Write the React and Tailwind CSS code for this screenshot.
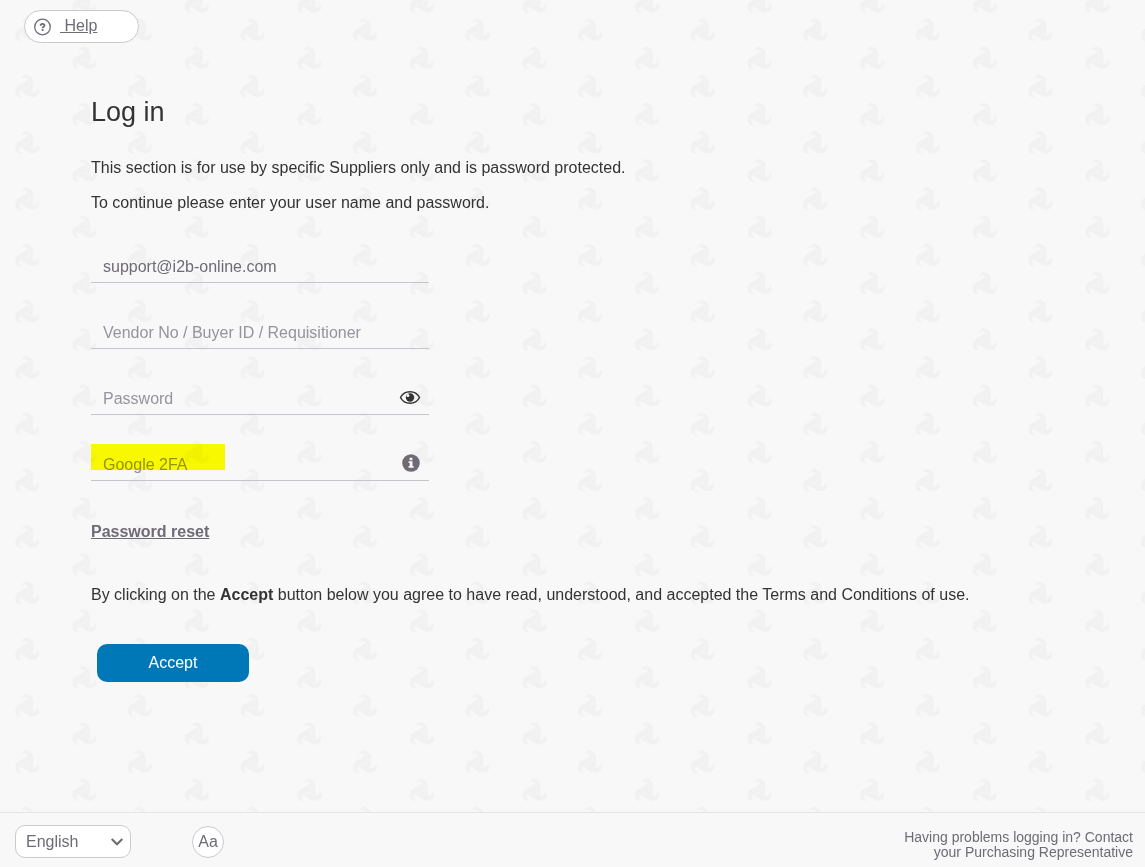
import { useState } from "react";

function Blade({ angle }) {
  return (
    <path
      transform={`rotate(${angle})`}
      d="M-5.5 -8.5 C-5.5 -12.5 -1.5 -14 1.5 -12.8 C5.5 -11.3 6.8 -8 6.5 -4.5 C6.3 -1.5 6 1.5 7 5 C4 5.5 0.5 4 -0.2 1.5 C-1 -1.5 1.2 -4.5 0.3 -7.5 C-0.6 -10.3 -3.5 -10.3 -5.5 -8.5 Z"
    />
  );
}

function Swirl({ x, y }) {
  return (
    <g transform={`translate(${x} ${y})`} fill="#f1f1f1" stroke="#f8f8f8" strokeWidth="0.6">
      <Blade angle={0} />
      <Blade angle={120} />
      <Blade angle={240} />
    </g>
  );
}

function Backdrop() {
  return (
    <svg aria-hidden="true" className="pointer-events-none absolute inset-0 h-full w-full">
      <defs>
        <pattern id="swirls" width="112.56" height="56.3" patternUnits="userSpaceOnUse">
          <Swirl x={27} y={31.5} />
          <Swirl x={84} y={3.3} />
          <Swirl x={84} y={59.6} />
        </pattern>
      </defs>
      <rect width="100%" height="100%" fill="url(#swirls)" />
    </svg>
  );
}

function EyeIcon() {
  return (
    <svg aria-hidden="true" viewBox="0 0 22 16" className="h-4 w-[22px]" fill="none">
      <path d="M1.5 7.5C3.4 3.7 7 1.7 11 1.7S18.6 3.7 20.5 7.5C18.6 11.3 15 13.3 11 13.3S3.4 11.3 1.5 7.5Z" stroke="currentColor" strokeWidth="1.5" strokeLinejoin="round" />
      <circle cx="11" cy="7.5" r="4.2" fill="currentColor" />
      <circle cx="8.9" cy="5.4" r="1.5" fill="#f8f8f8" />
    </svg>
  );
}

function InfoIcon() {
  return (
    <svg aria-hidden="true" viewBox="0 0 18 18" className="h-[18px] w-[18px]">
      <circle cx="9" cy="9" r="8.8" fill="currentColor" />
      <path d="M7.6 3.8H10.4V6.2H7.6ZM6.6 7.2H10.5V12H11.6V13.8H6.6V12H7.7V9H6.6Z" fill="#f8f8f8" />
    </svg>
  );
}

function Field({ label, type = "text", defaultValue, children }) {
  return (
    <div className="relative flex h-[34px] items-center border-b border-[#c5c5cd]">
      <input
        type={type}
        aria-label={label}
        placeholder={label}
        defaultValue={defaultValue}
        className="h-full w-full min-w-0 bg-transparent pt-[2px] pr-2 pl-3 text-base text-[#6e6b75] outline-none placeholder:text-[#96939b]"
      />
      {children}
    </div>
  );
}

export default function App() {
  const [visible, setVisible] = useState(false);
  return (
    <div className="flex min-h-screen flex-col bg-[#f8f8f8] font-['Liberation_Sans',Arial,sans-serif] text-base text-[#333]">
      <div className="relative flex-1">
        <Backdrop />
        <header className="relative px-6 pt-[10px]">
          <a href="#help" className="flex h-[33px] w-[115px] items-center rounded-full border border-[#cacace] bg-white pb-px pl-[9px] text-[#6e6b75]">
            <svg aria-hidden="true" viewBox="0 0 18 18" className="mt-[2px] h-[18px] w-[18px]" fill="none" stroke="currentColor">
              <circle cx="8.5" cy="9" r="7.8" strokeWidth="1.3" />
              <path d="M6.6 7.7C6.6 5.4 10.5 5.4 10.5 7.4C10.5 8.8 8.6 8.7 8.6 10.2" strokeWidth="1.8" />
              <circle cx="8.6" cy="12" r="1.1" fill="currentColor" stroke="none" />
            </svg>
            <span className="ml-2 whitespace-pre underline"> Help</span>
          </a>
        </header>

        <main className="relative px-[91px] pt-[53px] pb-8">
          <h1 className="text-[27px] leading-8">Log in</h1>
          <p className="mt-7 leading-6">This section is for use by specific Suppliers only and is password protected.</p>
          <p className="mt-[11px] leading-6">To continue please enter your user name and password.</p>

          <form onSubmit={(e) => e.preventDefault()}>
            <div className="mt-[34px] flex max-w-[338px] flex-col gap-8">
              <Field label="User name" defaultValue="support@i2b-online.com" />
              <Field label="Vendor No / Buyer ID / Requisitioner" />
              <Field label="Password" type={visible ? "text" : "password"}>
                <button type="button" aria-label="Show password" onClick={() => setVisible(!visible)} className="mr-2 text-[#333]">
                  <EyeIcon />
                </button>
              </Field>
              <Field label="Google 2FA">
                <button type="button" aria-label="About Google 2FA" className="mr-[9px] pb-px text-[#6e6b75]">
                  <InfoIcon />
                </button>
                <span className="pointer-events-none absolute -top-[3px] left-0 h-[26px] w-[134px] bg-[#ff0] mix-blend-multiply" />
              </Field>
            </div>

            <a href="#reset" className="mt-[39px] inline-block leading-6 font-bold text-[#6e6b75] underline">Password reset</a>
            <p className="mt-[39px] leading-6">
              By clicking on the <strong>Accept</strong> button below you agree to have read, understood, and accepted the Terms and Conditions of use.
            </p>
            <button type="submit" className="mt-[37px] ml-[6px] h-[38px] w-[152px] rounded-[10px] bg-[#0077b6] pb-px text-white">Accept</button>
          </form>
        </main>
      </div>

      <footer className="flex items-start justify-between border-t border-[#e5e5e7] pt-3 pr-3 pb-[7px] pl-[15px] text-[#6e6b75]">
        <div className="flex items-end">
          <div className="relative">
            <select aria-label="Language" className="block h-[33px] w-[116px] appearance-none rounded-[10px] border border-[#cacace] bg-white pl-[10px] text-base">
              <option>English</option>
            </select>
            <svg aria-hidden="true" viewBox="0 0 12 8" className="pointer-events-none absolute top-[13px] right-[8px] h-2 w-3" fill="none" stroke="currentColor" strokeWidth="2">
              <path d="M0.7 1L6 6.3L11.3 1" />
            </svg>
          </div>
          <button type="button" aria-label="Text size" className="ml-[61px] h-8 w-8 rounded-full border border-[#cacace] bg-white pb-px">Aa</button>
        </div>
        <a href="#contact" className="mt-[5px] max-w-[230px] text-right text-sm leading-[15px]">
          Having problems logging in? Contact your Purchasing Representative
        </a>
      </footer>
    </div>
  );
}
